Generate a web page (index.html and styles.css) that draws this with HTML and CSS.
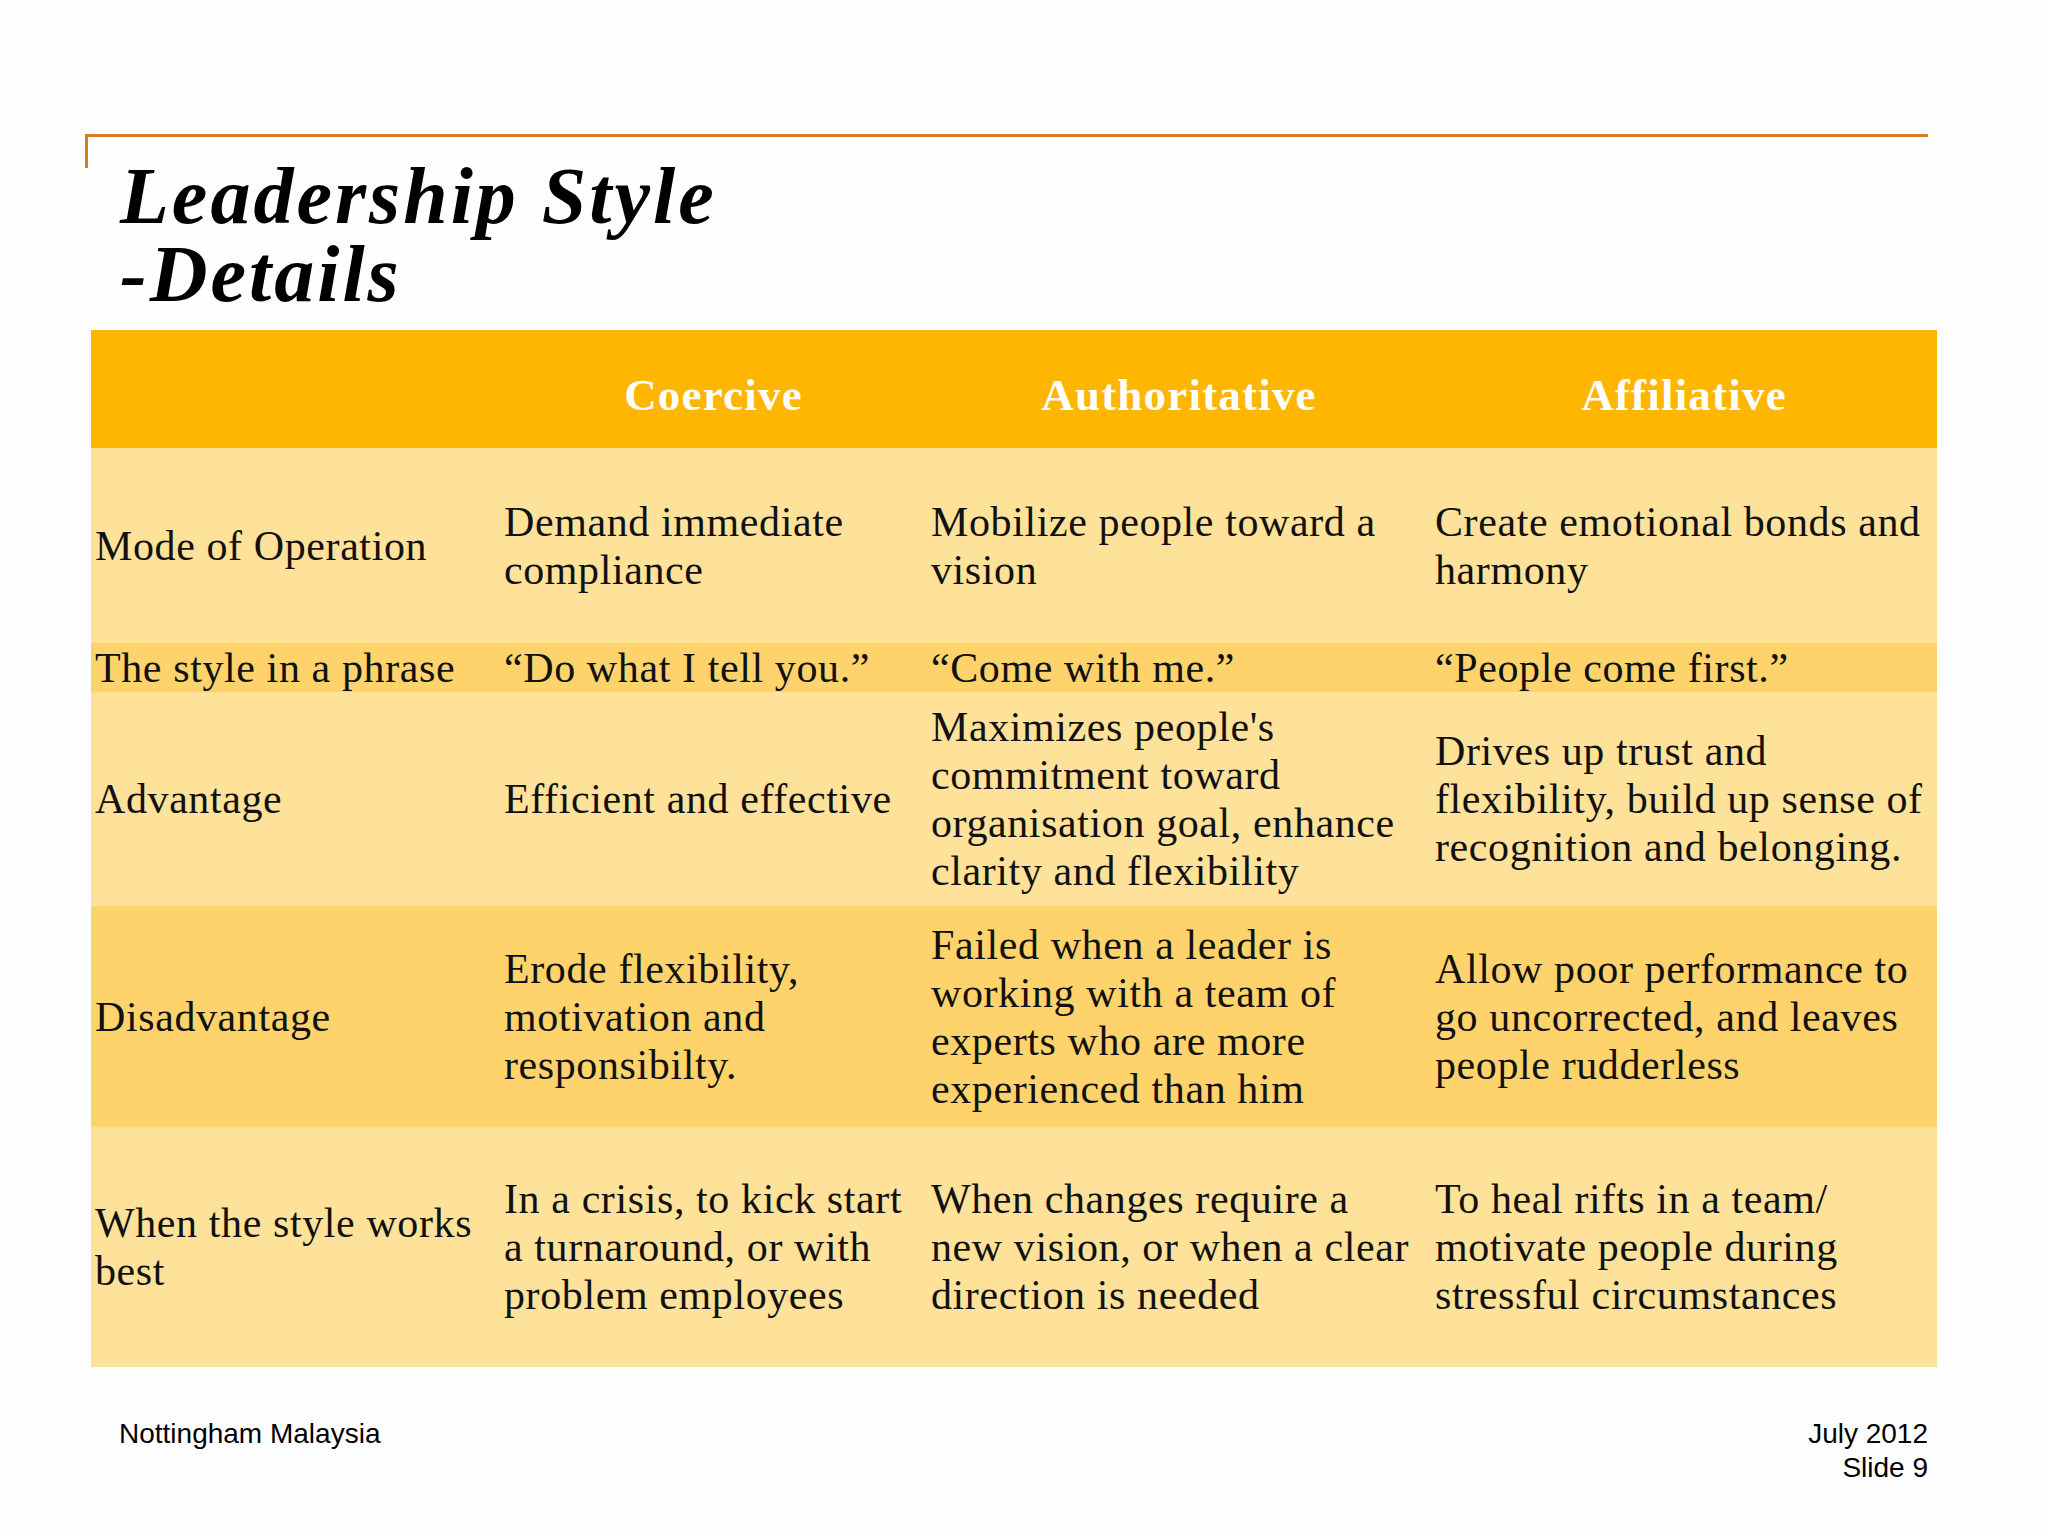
FILE: index.html
```html
<!DOCTYPE html>
<html lang="en">
<head>
<meta charset="utf-8">
<title>Leadership Style - Details</title>
<link rel="stylesheet" href="styles.css">
</head>
<body>
<div class="slide">
  <div class="rule"></div>
  <h1 class="title">Leadership Style<br>-Details</h1>
  <table class="grid">
    <colgroup>
      <col class="c1"><col class="c2"><col class="c3"><col class="c4">
    </colgroup>
    <thead>
      <tr class="head">
        <th></th>
        <th>Coercive</th>
        <th>Authoritative</th>
        <th>Affiliative</th>
      </tr>
    </thead>
    <tbody>
      <tr class="light r1">
        <td>Mode of Operation</td>
        <td>Demand immediate<br>compliance</td>
        <td>Mobilize people toward a<br>vision</td>
        <td>Create emotional bonds and<br>harmony</td>
      </tr>
      <tr class="dark r2">
        <td>The style in a phrase</td>
        <td>“Do what I tell you.”</td>
        <td>“Come with me.”</td>
        <td>“People come first.”</td>
      </tr>
      <tr class="light r3">
        <td>Advantage</td>
        <td>Efficient and effective</td>
        <td>Maximizes people's<br>commitment toward<br>organisation goal, enhance<br>clarity and flexibility</td>
        <td>Drives up trust and<br>flexibility, build up sense of<br>recognition and belonging.</td>
      </tr>
      <tr class="dark r4">
        <td>Disadvantage</td>
        <td>Erode flexibility,<br>motivation and<br>responsibilty.</td>
        <td>Failed when a leader is<br>working with a team of<br>experts who are more<br>experienced than him</td>
        <td>Allow poor performance to<br>go uncorrected, and leaves<br>people rudderless</td>
      </tr>
      <tr class="light r5">
        <td>When the style works<br>best</td>
        <td>In a crisis, to kick start<br>a turnaround, or with<br>problem employees</td>
        <td>When changes require a<br>new vision, or when a clear<br>direction is needed</td>
        <td>To heal rifts in a team/<br>motivate people during<br>stressful circumstances</td>
      </tr>
    </tbody>
  </table>
  <div class="footer">
    <div class="org">Nottingham Malaysia</div>
    <div class="meta">July 2012<br>Slide 9</div>
  </div>
</div>
</body>
</html>
```
FILE: styles.css
```css
html, body {
  margin: 0;
  padding: 0;
  background: #fefefe;
}
.slide {
  width: 2048px;
  height: 1536px;
  box-sizing: border-box;
  padding-top: 134px;
}
.rule {
  margin-left: 85px;
  width: 1843px;
  height: 34px;
  border-top: 3px solid #d97c22;
  border-left: 3px solid #d97c22;
  box-sizing: border-box;
}
.title {
  margin: -34px 0 0 120px;
  padding-top: 23px;
  height: 196px;
  box-sizing: border-box;
  font-family: "Liberation Serif", "Times New Roman", serif;
  font-style: italic;
  font-weight: bold;
  font-size: 80px;
  line-height: 78px;
  letter-spacing: 3px;
  color: #000;
}
.grid {
  margin-left: 91px;
  border-collapse: collapse;
  table-layout: fixed;
  width: 1846px;
  font-family: "Liberation Serif", "Times New Roman", serif;
  font-size: 42px;
  line-height: 48px;
  letter-spacing: 0.6px;
  color: #111;
}
.c1 { width: 409px; }
.c2 { width: 427px; }
.c3 { width: 504px; }
.c4 { width: 506px; }
.grid th, .grid td {
  padding: 0 4px;
  vertical-align: middle;
  text-align: left;
  white-space: nowrap;
}
.head { height: 118px; background: #ffb600; }
.head th {
  color: #fff;
  font-weight: bold;
  font-size: 45px;
  letter-spacing: 1.2px;
  text-align: center;
  padding-top: 12px;
}
.light { background: #ffe29a; }
.dark { background: #ffd36b; }
.r1 { height: 195px; }
.r2 { height: 49px; }
.r3 { height: 214px; }
.r4 { height: 221px; }
.r5 { height: 240px; }
.footer {
  display: flex;
  justify-content: space-between;
  align-items: flex-start;
  margin: 50px 120px 0 119px;
  font-family: "Liberation Sans", Arial, sans-serif;
  font-size: 28px;
  line-height: 34px;
  color: #000;
}
.meta { text-align: right; }
```
